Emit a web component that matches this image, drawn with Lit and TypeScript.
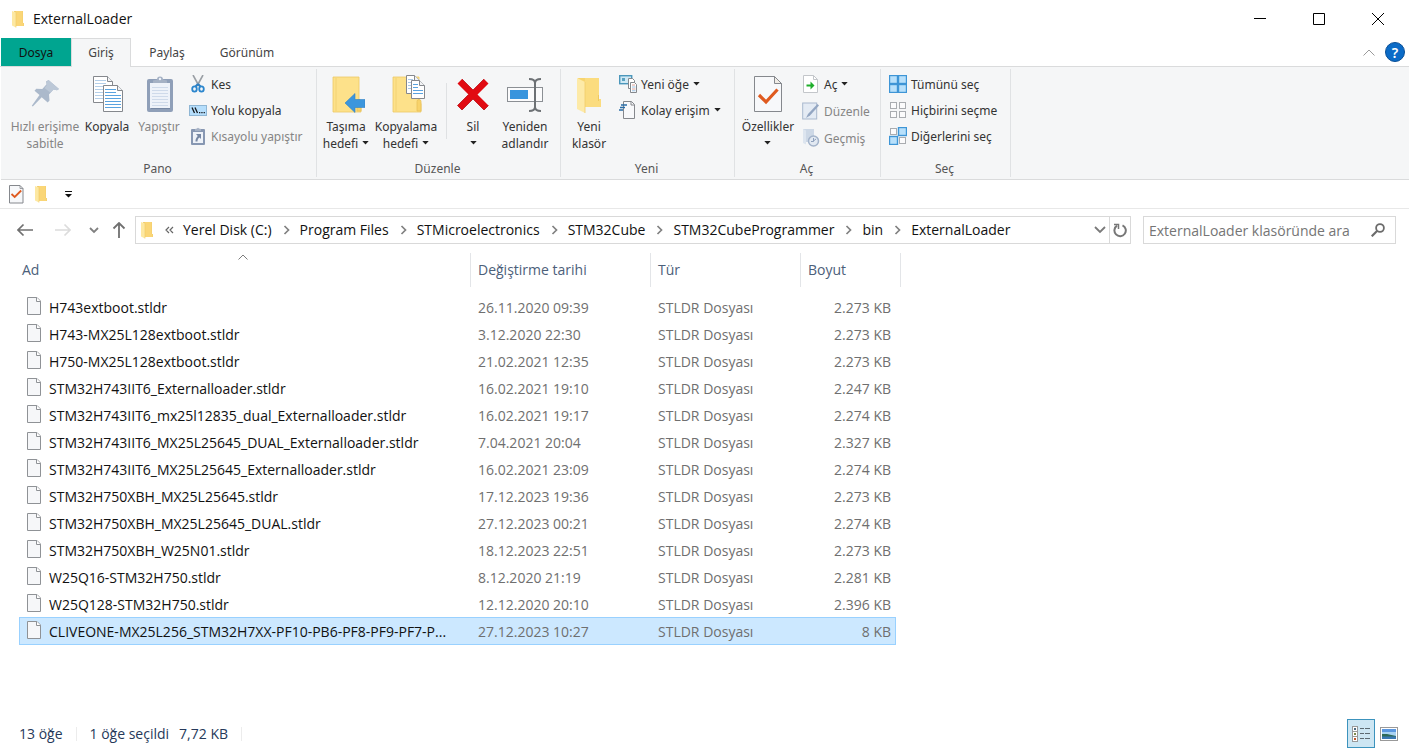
import { LitElement, html, svg, css, nothing } from "lit";
import type { TemplateResult } from "lit";
import { customElement, property } from "lit/decorators.js";
import { classMap } from "lit/directives/class-map.js";

/* ---------- icons ---------- */

const icon = (w: number, h: number, body: unknown) =>
  html`<svg class="icon" width=${w} height=${h} viewBox="0 0 ${w} ${h}" fill="none" aria-hidden="true">${body}</svg>`;

const folder = icon(12, 18, svg`
  <path d="M2 1h9v12h1v3H3z" fill="#f3cd6c"/>
  <path d="M4 1h6.500v12h1v3H4z" fill="#fad677"/>
  <path d="M0 1l4 1.500v15L0 15.500z" fill="#fde8a2"/>
  <path d="M4 2.500v15" stroke="#f0cb66" stroke-width=".6"/>`);

const fileIcon = icon(16, 22, svg`
  <path d="M1.500.5h9.500l3.500 3.500v13.500h-13z" fill="#f6f7f9" stroke="#8f9296"/>
  <path d="M10.500.5v4h4" fill="#fff" stroke="#8f9296"/>`);

const checkDoc = icon(15, 19, svg`
  <path d="M.5.5h10.500l3 3v14.500H.500z" fill="#f7f8fa" stroke="#85888d"/>
  <path d="M11 .500v3h3" stroke="#85888d" stroke-width=".8"/>
  <path d="M2.500 9l3.200 3 6.500-6.500" stroke="#df5a1f" stroke-width="1.800"/>`);

const pin = icon(38, 38, svg`
  <path d="M22.500 5l10.500 9-2 1.200-3.500-.700-4.500 5 .500 6-1.800 2-6-5.200L6.800 31.500l-1-.8L13.500 20l-5-4.200 1.800-2 6 .200 4.500-5-.800-2.600z" fill="#abb9cb"/>
  <path d="M22.500 5l10.500 9-2 1.200-3.500-.700-3 3.300-6-4.700 2.300-3-.800-2.600z" fill="#bcc8d7"/>`);

const page = (x: number, y: number, w: number, h: number, lines: string, edge = "#85888d") => svg`
  <path d="M${x + 0.5} ${y + 0.5}h${w - 6}l5 5v${h - 6}h${1 - w}z" fill="#fff" stroke=${edge}/>
  <path d="M${x + w - 5.5} ${y + 0.5}v5h5" fill="#f2f3f5" stroke=${edge}/>
  ${Array.from({ length: Math.floor((h - 6) / 3) }, (_, i) =>
    svg`<path d="M${x + 2} ${y + 4.5 + i * 3}h${i > 1 ? w - 4 : w - 9}" stroke=${lines}/>`)}`;

const copyIcon = icon(38, 38, svg`
  ${page(5, 1, 20, 27, "#b4cfe9")}
  ${page(15, 10, 20, 27, "#5aa3df")}`);

const pasteIcon = icon(38, 38, svg`
  <rect x="7" y="4" width="26" height="33" rx="2" fill="#8f9fb8"/>
  <rect x="10" y="8" width="20" height="25" fill="#eef2f9"/>
  ${[12, 15, 18, 21, 24, 27, 30].map((y) => svg`<path d="M12 ${y}.5h16" stroke="#cfdaea"/>`)}
  <path d="M11 33h19v1H11z" fill="#7788a4"/>
  <path d="M13 8V5.500l4-1a3 3 0 0 1 6 0l4 1V8z" fill="#a5b1c4"/>
  <circle cx="20" cy="4" r="1.200" fill="#eef2f9"/>`);

const cutIcon = icon(18, 18, svg`
  <path d="M4 0l6 11M14 0L8 11" stroke="#9a9fa5" stroke-width="1.600"/>
  <path d="M9 9l-2.500 2.500M9 9l2.500 2.500" stroke="#2b7fc4" stroke-width="2"/>
  <ellipse cx="5.500" cy="14" rx="2.300" ry="2.600" stroke="#2b86cd" stroke-width="1.800"/>
  <ellipse cx="12.500" cy="14" rx="2.300" ry="2.600" stroke="#2b86cd" stroke-width="1.800"/>`);

const pathIcon = icon(18, 18, svg`
  <rect x=".5" y="4.500" width="17" height="10" fill="#b5defc" stroke="#8fb6d4"/>
  <path d="M3 6.500l2.500 5.500M6 6.500l2.500 5.500" stroke="#15181c" stroke-width="1.300"/>
  <path d="M10 11h1.300v1.300H10zM12.300 11h1.300v1.300h-1.300zM14.600 11h1.300v1.300h-1.300z" fill="#15181c"/>`);

const pasteLinkIcon = icon(18, 18, svg`
  <rect x="2" y="2" width="14" height="16" rx="1" fill="#8797b2"/>
  <rect x="4" y="5" width="10" height="11" fill="#eef2f8"/>
  <path d="M6 4V2l2-.5a1.200 1.200 0 0 1 2 0L12 2v2z" fill="#a5b1c4"/>
  <path d="M7 7h5v5l-1.500-1.500c-1.500 1-2 2-2 4h-2c0-2.500.800-4 2.300-5.500z" fill="#7687a3"/>`);

const bigFolder = svg`
  <path d="M6 2h26v26.500h2V37H6z" fill="#fde18a"/>
  <path d="M6 2h26v26.500h2V37H6z" stroke="#ecc966" stroke-width=".8"/>
  <path d="M9 3v33" stroke="#f2d274"/>
  <path d="M30 36V26.500q0-2 2-2t2 2V36z" fill="#f8d36b" stroke="#e8c25a" stroke-width=".8"/>`;

const moveIcon = icon(38, 38, svg`${bigFolder}
  <path d="M18 28l10-9.500v6h10v8H28v5z" fill="#3c96dd" stroke="#2f82c6" stroke-width=".6"/>`);

const copyToIcon = icon(38, 38, svg`${bigFolder}
  ${page(19, 0, 14, 19, "#a9c8e6")}
  ${page(24, 5, 14, 19, "#5aa3df")}`);

const deleteIcon = icon(38, 38, svg`
  <path d="M8 4l11 11L30 4l4.500 4.500L23.500 19.500l11 11L30 35 19 24 8 35l-4.500-4.500 11-11-11-11z" fill="#e10b12"/>
  <path d="M8 4l11 11L30 4M14.500 19.500l-11 11L8 35l11-11 11 11 4.500-4.500" stroke="#b80f15" stroke-width=".8"/>`);

const renameIcon = icon(38, 38, svg`
  <rect x="1.500" y="12.500" width="35" height="14" fill="#fbfbfc" stroke="#8b8f94"/>
  <rect x="4" y="15" width="18" height="9" fill="#3894dd"/>
  <path d="M23 4c4 0 6 1 6 4 0-3 2-4 6-4M29 7v26M23 36c4 0 6-1 6-4 0 3 2 4 6 4" stroke="#6d7175" stroke-width="2"/>`);

const newFolderIcon = icon(38, 38, svg`
  <path d="M8 3h21v21h2v8H10z" fill="#f7d46f"/>
  <path d="M15 3h14v21h2v8H15z" fill="#fbdc7f"/>
  <path d="M7 3l8 4v31l-8-4z" fill="#fdeaa8"/>
  <path d="M15 7v31" stroke="#f1cd69" stroke-width=".8"/>
  <path d="M28.500 20v6" stroke="#efc95f"/>`);

const newItemIcon = icon(18, 20, svg`
  <rect x=".7" y="1.700" width="12" height="8" fill="#cfe9f5" stroke="#4b97bb" stroke-width="1.400"/>
  <path d="M3 4h3v3H3z" fill="#5ba2c1"/>
  <path d="M9.500 4.500h4l2 2v8h-6z" fill="#fff" stroke="#85888d"/>
  <path d="M11.500 8.500h4l2 2v8h-6z" fill="#fff" stroke="#85888d"/>
  <path d="M13 11h3M13 15h3.500" stroke="#d98a7e" stroke-width=".8"/>
  <path d="M13 13h3.500M13 16.800h3.500" stroke="#7fb2dc" stroke-width=".8"/>`);

const easyAccessIcon = icon(18, 20, svg`
  <path d="M4.500 1.500h8l3 3v14h-11z" fill="#f8f9fb" stroke="#85888d"/>
  <path d="M12 1.500v3.500h3.500" stroke="#85888d"/>
  <path d="M2 5h6M1 7.500h5M0 10h4" stroke="#2a6ea8" stroke-width="1.300"/>`);

const propsIcon = icon(38, 38, svg`
  <path d="M5.500 1.500h20l7 7v28h-27z" fill="#f7f8fa" stroke="#85888d"/>
  <path d="M25.500 1.500v7h7z" fill="#f0ece6" stroke="#85888d"/>
  <path d="M10 20l7 7L28.500 14.500" stroke="#df5a1f" stroke-width="3.200"/>`);

const openIcon = icon(18, 18, svg`
  <path d="M1.500.5h10l4 4v13h-14z" fill="#fff" stroke="#c3c6ca"/>
  <path d="M11.500.5v4h4" stroke="#c3c6ca"/>
  <path d="M4.500 9.500h4v-3l4 4-4 4v-3h-4z" fill="#1fae2b"/>`);

const editIcon = icon(18, 18, svg`
  <rect x=".7" y="1" width="14" height="16" fill="#e4ebf4" stroke="#a9b8ce"/>
  <path d="M15.500 2L6 12l-2 4 4-2.500L17 3.500z" fill="#93a6c2"/>`);

const historyIcon = icon(18, 18, svg`
  <path d="M1 0h11v13H1z" fill="#cdd8e6"/><path d="M1 0l3 1.500v14L1 14z" fill="#dde5ef"/>
  <circle cx="11.500" cy="12" r="5" fill="#e2e9f2" stroke="#a3b3ca" stroke-width="1.500"/>
  <path d="M11.500 9v3.500H9M11.500 12l2.500-2" stroke="#8fa1bd"/>`);

const squares = (on: boolean[]) => {
  const cell = (x: number, y: number, sel: boolean) => svg`
    <rect x=${x + 0.5} y=${y + 0.5} width=${sel ? 8 : 6} height=${sel ? 8 : 6}
      fill=${sel ? "#b8e0fb" : "#fbfbfc"} stroke=${sel ? "#3e95d6" : "#a9acb0"} stroke-width=${sel ? 1.4 : 1}/>`;
  return icon(18, 18, svg`
    ${cell(on[0] ? 0 : 1, on[0] ? 0 : 1, on[0])}${cell(on[1] ? 9 : 10, on[1] ? 0 : 1, on[1])}
    ${cell(on[2] ? 0 : 1, on[2] ? 9 : 10, on[2])}${cell(on[3] ? 9 : 10, on[3] ? 9 : 10, on[3])}`);
};

const caret = html`<svg class="caret" width="7" height="5" viewBox="0 0 7 5" aria-hidden="true"><path d="M.3 0h6.400L3.500 3.500z" fill="#222"/></svg>`;

const line = (w: number, h: number, d: string, stroke: string, sw = 1) =>
  icon(w, h, svg`<path d=${d} stroke=${stroke} stroke-width=${sw}/>`);

/* ---------- ribbon button ---------- */

@customElement("ribbon-button")
export class RibbonButton extends LitElement {
  @property({ attribute: false }) glyph?: TemplateResult;
  @property({ attribute: false }) lines: string[] = [];
  @property({ type: Boolean }) small = false;
  @property({ type: Boolean }) menu = false;
  @property({ type: Boolean }) off = false;

  static styles = css`
    :host { display: block; }
    button {
      display: flex;
      align-items: center;
      margin: 0;
      padding: 0;
      border: 0;
      background: none;
      color: #333;
      font: 12px/17px "Noto Sans", "Open Sans", sans-serif;
      white-space: nowrap;
    }
    button:disabled { color: #858585; }
    .large { flex-direction: column; gap: 5px; width: 100%; }
    .small { gap: 4px; height: 26px; }
    .label { display: flex; flex-direction: column; align-items: center; }
    .row { display: flex; align-items: center; gap: 4px; min-height: 17px; }
    .icon, .caret { display: block; flex: none; }
  `;

  render() {
    const last = this.lines.length - 1;
    return html`<button ?disabled=${this.off} class=${classMap({ small: this.small, large: !this.small })}>
      ${this.glyph}
      <span class="label">
        ${this.lines.map((t, i) => html`<span class="row">${t}${this.menu && i === last ? caret : nothing}</span>`)}
      </span>
    </button>`;
  }
}

/* ---------- window ---------- */

const files: [string, string, string][] = [
  ["H743extboot.stldr", "26.11.2020 09:39", "2.273 KB"],
  ["H743-MX25L128extboot.stldr", "3.12.2020 22:30", "2.273 KB"],
  ["H750-MX25L128extboot.stldr", "21.02.2021 12:35", "2.273 KB"],
  ["STM32H743IIT6_Externalloader.stldr", "16.02.2021 19:10", "2.247 KB"],
  ["STM32H743IIT6_mx25l12835_dual_Externalloader.stldr", "16.02.2021 19:17", "2.274 KB"],
  ["STM32H743IIT6_MX25L25645_DUAL_Externalloader.stldr", "7.04.2021 20:04", "2.327 KB"],
  ["STM32H743IIT6_MX25L25645_Externalloader.stldr", "16.02.2021 23:09", "2.274 KB"],
  ["STM32H750XBH_MX25L25645.stldr", "17.12.2023 19:36", "2.273 KB"],
  ["STM32H750XBH_MX25L25645_DUAL.stldr", "27.12.2023 00:21", "2.274 KB"],
  ["STM32H750XBH_W25N01.stldr", "18.12.2023 22:51", "2.273 KB"],
  ["W25Q16-STM32H750.stldr", "8.12.2020 21:19", "2.281 KB"],
  ["W25Q128-STM32H750.stldr", "12.12.2020 20:10", "2.396 KB"],
  ["CLIVEONE-MX25L256_STM32H7XX-PF10-PB6-PF8-PF9-PF7-P...", "27.12.2023 10:27", "8 KB"],
];

const crumbs = ["Yerel Disk (C:)", "Program Files", "STMicroelectronics", "STM32Cube", "STM32CubeProgrammer", "bin", "ExternalLoader"];

const large = (glyph: TemplateResult, lines: string[], menu = false, off = false) =>
  html`<ribbon-button .glyph=${glyph} .lines=${lines} ?menu=${menu} ?off=${off}></ribbon-button>`;
const small = (glyph: TemplateResult, text: string, menu = false, off = false) =>
  html`<ribbon-button small .glyph=${glyph} .lines=${[text]} ?menu=${menu} ?off=${off}></ribbon-button>`;

@customElement("app-root")
export class AppRoot extends LitElement {
  static styles = css`
    :host {
      display: flex;
      flex-direction: column;
      min-height: 100vh;
      background: #fff;
      color: #111;
      font: 14px/20px "Open Sans", "Noto Sans", sans-serif;
    }
    * { box-sizing: border-box; }
    button {
      display: flex;
      align-items: center;
      justify-content: center;
      margin: 0;
      padding: 0;
      border: 0;
      background: none;
      color: inherit;
      font: inherit;
      white-space: nowrap;
    }
    .icon { display: block; flex: none; }
    .grow { flex: 1; }

    .title { display: flex; align-items: center; height: 38px; padding: 0 2px 0 12px; }
    .title h1 { flex: 1; margin: 0 0 0 9px; font-size: 14px; font-weight: 400; }
    .title button { width: 59px; height: 38px; }

    .tabs {
      display: flex;
      height: 29px;
      padding-left: 1px;
      border-bottom: 1px solid #dadbdc;
      color: #444;
      font: 12px/17px "Noto Sans", "Open Sans", sans-serif;
    }
    .tab { width: 72px; height: 28px; }
    .tab.wide { width: 88px; }
    .tab.file { width: 70px; background: #00a590; color: #111; }
    .tab.active { width: 60px; height: 29px; padding-bottom: 2px; border: 1px solid #dadbdc; border-bottom: 0; background: #f5f6f7; }
    .collapse { width: 32px; }
    .help {
      width: 20px;
      height: 20px;
      margin: 4px 4px 0 0;
      border: 1px solid #0a4f96;
      border-radius: 50%;
      background: #0b6bc7;
      color: #fff;
      font-size: 14px;
      font-weight: 600;
    }

    .ribbon { display: flex; margin-left: 1px; height: 113px; padding: 2px 0; border-bottom: 1px solid #dadbdc; background: #f5f6f7; }
    .group { display: flex; flex-direction: column; border-right: 1px solid #e0e2e4; }
    .body { display: flex; flex: 1; padding-top: 6px; }
    .caption { padding-right: 2px; color: #555; font: 12px/17px "Noto Sans", "Open Sans", sans-serif; text-align: center; }
    .list { display: flex; flex-direction: column; margin-top: -4px; }
    .clip { width: 316px; }
    .clip .body { padding-left: 8px; }
    .organize { width: 244px; }
    .organize .body { padding-left: 3px; }
    .new { width: 174px; }
    .new .body { padding-left: 2px; }
    .open { width: 146px; }
    .open .body { padding-left: 3px; }
    .open .list { gap: 1px; }
    .select { width: 130px; }
    .select .body { padding-left: 8px; }
    .w72 { width: 72px; }
    .w68 { width: 68px; }
    .w52 { width: 52px; }
    .w60 { width: 60px; }
    .inset { margin-left: 4px; }
    .rule { width: 1px; height: 56px; margin: 8px 0 0 6px; background: #dfe1e3; }

    .quick { display: flex; align-items: center; gap: 11px; height: 29px; padding-left: 9px; border-bottom: 1px solid #e8e8e8; }
    .quick .more { margin-left: 7px; }

    .nav { display: flex; align-items: center; padding: 7px 13px 0 12px; }
    .nav > button { width: 26px; height: 28px; }
    .nav > .next { margin-left: 12px; }
    .nav > .recent { margin-left: 5px; }
    .nav > .up { width: 24px; margin-right: 4px; }
    .address { display: flex; flex: 1; align-items: center; height: 28px; border: 1px solid #d9d9d9; padding-left: 5px; }
    .crumbs { display: flex; flex: 1; align-items: center; }
    .crumbs a { color: #111; text-decoration: none; }
    .address .drop { width: 19px; height: 26px; }
    .address .reload { width: 21px; height: 26px; border-left: 1px solid #d9d9d9; }
    .search { display: flex; align-items: center; width: 253px; height: 28px; margin-left: 12px; border: 1px solid #d9d9d9; }
    .search input {
      flex: 1;
      min-width: 0;
      height: 26px;
      padding: 0 0 0 5px;
      border: 0;
      outline: 0;
      background: none;
      color: #333;
      font: inherit;
    }
    .search input::placeholder { color: #757575; opacity: 1; }
    .search label { display: flex; align-items: center; justify-content: center; width: 34px; height: 26px; }

    table { margin: 9px 0 0 19px; width: 882px; border-collapse: separate; border-spacing: 0; table-layout: fixed; }
    .c-name { width: 451px; }
    .c-date { width: 180px; }
    .c-type { width: 150px; }
    .c-size { width: 96px; }
    th { height: 34px; padding: 0 7px; border-left: 1px solid #e3e5e8; color: #4c607a; font-weight: 400; text-align: left; }
    th:first-child { padding-left: 3px; border-left: 0; }
    th:last-child { padding: 0; border-left: 0; border-right: 1px solid #e3e5e8; }
    .sort { display: grid; grid-template-columns: 1fr auto 1fr; width: 100%; height: 34px; text-align: left; }
    .sort .icon { align-self: start; margin-top: 1px; }
    tbody::before { content: ""; display: block; height: 6px; }
    td { height: 27px; padding: 2px 5px 0 8px; color: #6f6f6f; white-space: nowrap; }
    td.name { color: #111; padding: 2px 0 0 7px; }
    .file { display: flex; align-items: center; gap: 7px; }
    td.size { text-align: right; }
    td.end { padding: 0; }
    .chosen td { height: 28px; }
    .chosen td:not(.end) { background: #cce8ff; border: solid #99d1ff; border-width: 1px 0; }
    .chosen td.name { border-left-width: 1px; padding-left: 6px; }
    .chosen td.size { border-right-width: 1px; padding-right: 4px; }

    .status { display: flex; align-items: center; margin-top: auto; height: 31px; padding: 0 6px 0 19px; color: #26395a; }
    .status .sep { width: 1px; height: 14px; margin: 0 13px; background: #ececec; }
    .status .size { margin-left: 10px; }
    .status button { width: 28px; height: 29px; }
    .status .on { border: 1px solid #3c93bd; background: #cde6f3; }
  `;

  render() {
    return html`
      <header class="title">
        ${folder}
        <h1>ExternalLoader</h1>
        <button aria-label="Simge durumuna küçült">${line(12, 12, "M0 5.500h12", "#000")}</button>
        <button aria-label="Ekranı kapla">${line(12, 12, "M.5.5h11v11H.5z", "#000")}</button>
        <button aria-label="Kapat">${line(12, 12, "M0 0l12 12M12 0L0 12", "#000")}</button>
      </header>

      <nav class="tabs" aria-label="Şerit">
        <button class="tab file">Dosya</button>
        <button class="tab active">Giriş</button>
        <button class="tab">Paylaş</button>
        <button class="tab wide">Görünüm</button>
        <span class="grow"></span>
        <button class="collapse" aria-label="Şeridi küçült">${line(12, 7, "M.5 6.500l5.500-5.500 5.500 5.500", "#9a9a9a")}</button>
        <button class="help" aria-label="Yardım">?</button>
      </nav>

      <section class="ribbon">
        <div class="group clip">
          <div class="body">
            <div class="w72">${large(pin, ["Hızlı erişime", "sabitle"], false, true)}</div>
            <div class="w52">${large(copyIcon, ["Kopyala"])}</div>
            <div class="w52">${large(pasteIcon, ["Yapıştır"], false, true)}</div>
            <div class="list inset">
              ${small(cutIcon, "Kes")}${small(pathIcon, "Yolu kopyala")}${small(pasteLinkIcon, "Kısayolu yapıştır", false, true)}
            </div>
          </div>
          <div class="caption">Pano</div>
        </div>
        <div class="group organize">
          <div class="body">
            <div class="w52">${large(moveIcon, ["Taşıma", "hedefi"], true)}</div>
            <div class="w68">${large(copyToIcon, ["Kopyalama", "hedefi"], true)}</div>
            <div class="rule"></div>
            <div class="w52">${large(deleteIcon, ["Sil", ""], true)}</div>
            <div class="w52">${large(renameIcon, ["Yeniden", "adlandır"])}</div>
          </div>
          <div class="caption">Düzenle</div>
        </div>
        <div class="group new">
          <div class="body">
            <div class="w52">${large(newFolderIcon, ["Yeni", "klasör"])}</div>
            <div class="list inset">${small(newItemIcon, "Yeni öğe", true)}${small(easyAccessIcon, "Kolay erişim", true)}</div>
          </div>
          <div class="caption">Yeni</div>
        </div>
        <div class="group open">
          <div class="body">
            <div class="w60">${large(propsIcon, ["Özellikler", ""], true)}</div>
            <div class="list inset">
              ${small(openIcon, "Aç", true)}${small(editIcon, "Düzenle", false, true)}${small(historyIcon, "Geçmiş", false, true)}
            </div>
          </div>
          <div class="caption">Aç</div>
        </div>
        <div class="group select">
          <div class="body">
            <div class="list">
              ${small(squares([true, true, true, true]), "Tümünü seç")}
              ${small(squares([false, false, false, false]), "Hiçbirini seçme")}
              ${small(squares([false, true, true, false]), "Diğerlerini seç")}
            </div>
          </div>
          <div class="caption">Seç</div>
        </div>
      </section>

      <div class="quick">
        <button aria-label="Özellikler">${checkDoc}</button>
        <button aria-label="Yeni klasör">${folder}</button>
        <button class="more" aria-label="Hızlı Erişim Araç Çubuğunu Özelleştir">
          ${icon(7, 7, svg`<path d="M0 0h7v1H0zM0 3h7L3.500 6.500z" fill="#111"/>`)}
        </button>
      </div>

      <div class="nav">
        <button aria-label="Geri">${line(16, 14, "M1 7h15M6.500 1.500L1 7l5.500 5.500", "#707070", 1.7)}</button>
        <button class="next" aria-label="İleri">${line(16, 14, "M0 7h15M9.500 1.500L15 7l-5.500 5.500", "#dcdcdc", 1.7)}</button>
        <button class="recent" aria-label="Son konumlar">${line(10, 7, "M1 1l4 4 4-4", "#808080", 1.8)}</button>
        <button class="up" aria-label="Yukarı">${line(14, 16, "M7 1v15M1.500 6.500L7 1l5.500 5.500", "#707070", 1.8)}</button>
        <div class="address">
          ${folder}
          <div class="crumbs">
            ${icon(30, 12, svg`<path d="M16 3l-3 3 3 3M20 3l-3 3 3 3" stroke="#666" stroke-width="1.200"/>`)}
            ${crumbs.map((c, i) => html`${i ? line(28, 12, "M12.500 2l4 4-4 4", "#808080", 1.7) : nothing}<a href="#">${c}</a>`)}
          </div>
          <button class="drop" aria-label="Önceki konumlar">${line(12, 8, "M1 1l5 5 5-5", "#7a7a7a", 1.8)}</button>
          <button class="reload" aria-label="Yenile">
            ${icon(14, 15, svg`<path d="M9.500 2.300a5.700 5.700 0 1 1-5.500.4" stroke="#777" stroke-width="2"/><path d="M1 1.500h4.500v4.500" stroke="#777" stroke-width="1.500"/>`)}
          </button>
        </div>
        <div class="search">
          <input id="q" type="text" aria-label="Ara" placeholder="ExternalLoader klasöründe ara" />
          <label for="q">
            ${icon(14, 14, svg`<circle cx="9" cy="5" r="3.900" stroke="#6b6b6b" stroke-width="1.800"/><path d="M6 8l-5.300 5.300" stroke="#6b6b6b" stroke-width="2.200"/>`)}
          </label>
        </div>
      </div>

      <table>
        <colgroup>
          <col class="c-name" /><col class="c-date" /><col class="c-type" /><col class="c-size" /><col />
        </colgroup>
        <thead>
          <tr>
            <th aria-sort="ascending">
              <button class="sort"><span>Ad</span>${line(10, 6, "M.5 5.500L5 1l4.500 4.500", "#7c7c7c")}</button>
            </th>
            <th><button>Değiştirme tarihi</button></th>
            <th><button>Tür</button></th>
            <th><button>Boyut</button></th>
            <th></th>
          </tr>
        </thead>
        <tbody>
          ${files.map(([name, date, size], i) => html`
            <tr class=${classMap({ chosen: i === files.length - 1 })}>
              <td class="name"><span class="file">${fileIcon}${name}</span></td>
              <td>${date}</td>
              <td>STLDR Dosyası</td>
              <td class="size">${size}</td>
              <td class="end"></td>
            </tr>`)}
        </tbody>
      </table>

      <footer class="status">
        <span>13 öğe</span><span class="sep"></span>
        <span>1 öğe seçildi</span><span class="size">7,72 KB</span><span class="sep"></span>
        <span class="grow"></span>
        <button class="on" aria-label="Ayrıntılar">
          ${icon(18, 16, svg`
            ${[0, 5, 10].map((y, i) => svg`
              <rect x=".5" y="${y + 0.5}" width="5" height="5" fill="#fff" stroke="#999"/>
              <rect x="2" y="${y + 2}" width="2" height="2" fill=${["#4b6a80", "#7d8a4c", "#c0552b"][i]}/>
              <path d="M8 ${y + 2.5}h4M13 ${y + 2.5}h5" stroke="#5d6a72"/>`)}`)}
        </button>
        <button aria-label="Büyük simgeler">
          ${icon(18, 14, svg`
            <rect x=".5" y=".5" width="17" height="13" fill="#fff" stroke="#999"/>
            <path d="M2 2h14v10H2z" fill="#a9d2f2"/>
            <path d="M2 2h14v3H2z" fill="#5b97e0"/><path d="M2 7l5 0 9 2v1H2z" fill="#2f6a58"/><path d="M2 9.500h14v2.500H2z" fill="#3a78b4"/>`)}
        </button>
      </footer>
    `;
  }
}
